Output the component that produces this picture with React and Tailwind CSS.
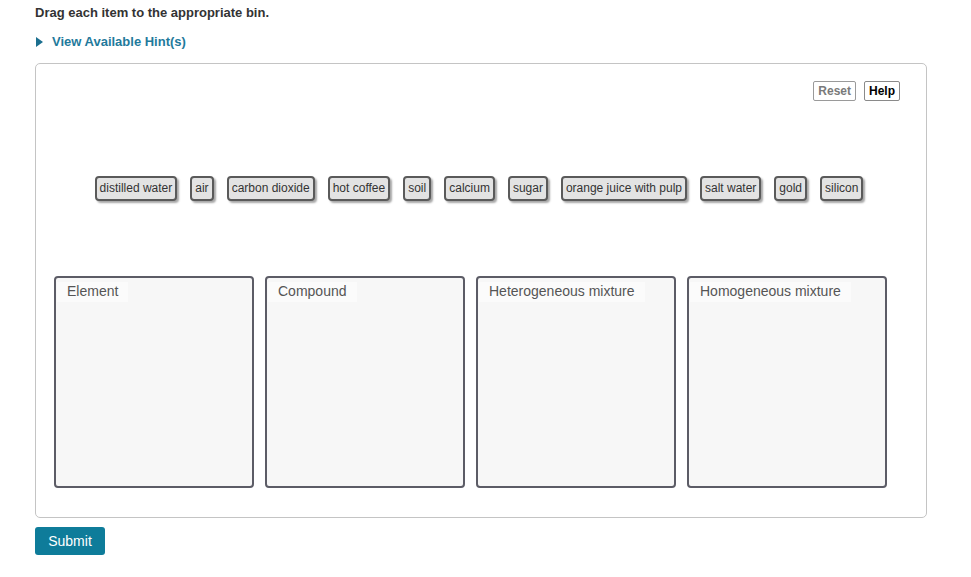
import React from 'react';

const items = [
  'distilled water',
  'air',
  'carbon dioxide',
  'hot coffee',
  'soil',
  'calcium',
  'sugar',
  'orange juice with pulp',
  'salt water',
  'gold',
  'silicon',
];

const bins = ['Element', 'Compound', 'Heterogeneous mixture', 'Homogeneous mixture'];

export default function App() {
  return (
    <div className="min-h-screen bg-white px-[35px] pt-[5px] text-[#333]" style={{ fontFamily: '"Liberation Sans", Arial, sans-serif' }}>
      <p className="text-[13px] font-bold leading-[15px]">Drag each item to the appropriate bin.</p>

      {/* hints toggle */}
      <div className="mt-[14px] flex items-center gap-[9px] text-[13px] font-bold leading-[15px] text-[#1f7a9c]">
        <svg width="7" height="10" viewBox="0 0 7 10" className="ml-[1px]">
          <path d="M0 0 L7 5 L0 10 Z" fill="#1b6f8f" />
        </svg>
        <span>View Available Hint(s)</span>
      </div>

      {/* drag panel */}
      <div className="mt-[14px] h-[455px] w-[892px] rounded-[5px] border border-[#c4c4c4] pt-[17px] pr-[26px] pl-[18px]">
        <div className="flex justify-end gap-[8px]">
          <button className="h-[20px] rounded-[2px] border border-[#9a9a9a] bg-white px-[4px] text-[12px] font-bold leading-none text-[#7a7a7a]">
            Reset
          </button>
          <button className="h-[20px] rounded-[2px] border border-[#8a8a8a] bg-white px-[4px] text-[12px] font-bold leading-none text-black">
            Help
          </button>
        </div>

        <div className="mt-[75px] flex flex-wrap justify-center gap-[13px] pl-[4px]">
          {items.map((item) => (
            <div
              key={item}
              className="h-[25px] rounded-[4px] border-2 border-[#5a5a5a] bg-[#e3e3e3] px-[3px] text-[12px] leading-[21px] text-[#333] shadow-[2px_2px_2px_rgba(0,0,0,0.35)]"
            >
              {item}
            </div>
          ))}
        </div>

        <div className="mt-[75px] flex gap-[11px]">
          {bins.map((bin) => (
            <div
              key={bin}
              className="h-[212px] w-[200px] rounded-[4px] border-2 border-[#5c5c66] bg-[#f7f7f7] p-px"
            >
              <span className="inline-block bg-[#fbfbfb] px-[10px] pb-[2px] text-[14px] leading-[18px] text-[#555]">{bin}</span>
            </div>
          ))}
        </div>
      </div>

      <button className="mt-[9px] h-[28px] w-[70px] rounded-[3px] bg-[#0e7c9a] text-[14px] text-white">
        Submit
      </button>
    </div>
  );
}
